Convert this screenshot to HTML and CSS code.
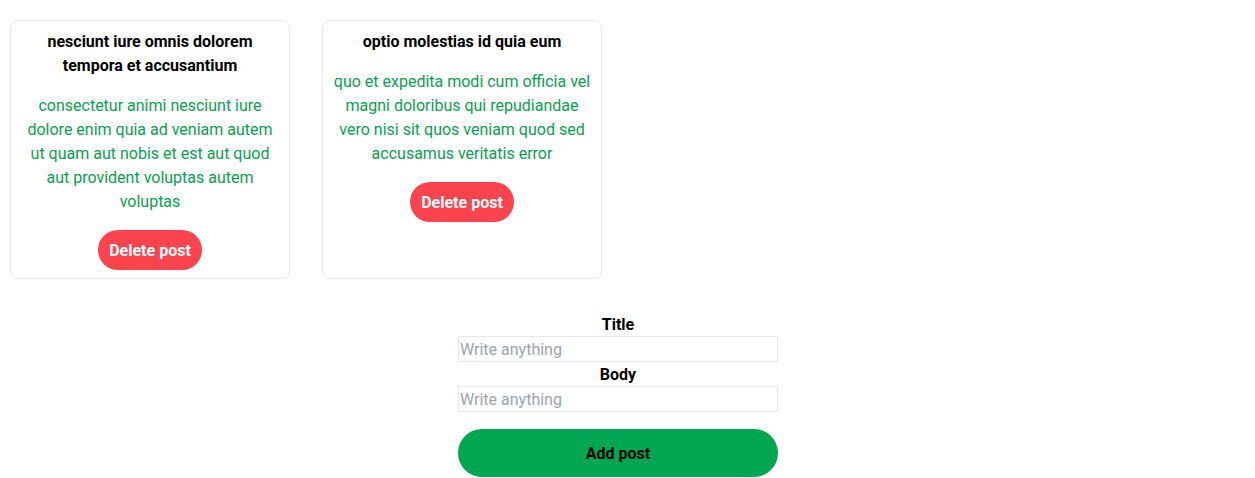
FILE: index.html
```html
<!DOCTYPE html>
<html>
<head>
<meta charset="utf-8">
<link rel="stylesheet" href="styles.css">
</head>
<body>
<div class="page">
  <div class="posts">
    <div class="card">
      <h2 class="card-title">nesciunt iure omnis dolorem tempora et accusantium</h2>
      <p class="card-body">consectetur animi nesciunt iure dolore enim quia ad veniam autem ut quam aut nobis et est aut quod aut provident voluptas autem voluptas</p>
      <button class="btn-delete">Delete post</button>
    </div>
    <div class="card">
      <h2 class="card-title">optio molestias id quia eum</h2>
      <p class="card-body">quo et expedita modi cum officia vel magni doloribus qui repudiandae vero nisi sit quos veniam quod sed accusamus veritatis error</p>
      <button class="btn-delete">Delete post</button>
    </div>
  </div>
  <form class="form">
    <label class="label">Title</label>
    <input class="input" type="text" placeholder="Write anything">
    <label class="label">Body</label>
    <input class="input" type="text" placeholder="Write anything">
    <button type="button" class="btn-add">Add post</button>
  </form>
</div>
</body>
</html>
```
FILE: styles.css
```css
* { box-sizing: border-box; }
body {
  margin: 0;
  font-family: Roboto, "Liberation Sans", sans-serif;
  font-size: 16px;
  line-height: 24px;
  color: #000;
  background: #fff;
}
.page {
  padding: 20px 29px 0 10px;
}
.posts {
  display: flex;
  gap: 32px;
  align-items: stretch;
}
.card {
  width: 280px;
  border: 1px solid #e5e7eb;
  border-radius: 8px;
  padding: 9px 8px 8px;
  display: flex;
  flex-direction: column;
  align-items: center;
  text-align: center;
}
.card-title {
  margin: 0;
  font-size: 16px;
  line-height: 24px;
  font-weight: 700;
}
.card-body {
  margin: 16px 0 0;
  color: #0a9f4f;
}
.btn-delete {
  margin-top: 16px;
  font: inherit;
  font-weight: 700;
  color: #fff;
  background: #fb444e;
  border: none;
  border-radius: 9999px;
  padding: 9px 11px 7px;
  line-height: 24px;
  cursor: pointer;
}
.form {
  width: 320px;
  margin: 33px auto 0;
  display: flex;
  flex-direction: column;
  align-items: stretch;
}
.label {
  text-align: center;
  font-weight: 700;
  padding-top: 1px;
  line-height: 23px;
}
.input {
  font: inherit;
  height: 26px;
  border: 1px solid #e5e7eb;
  padding: 1px 1px 0;
  margin: 0;
  outline: none;
}
.input::placeholder { color: #9ca3af; }
.btn-add {
  margin-top: 17px;
  height: 48px;
  font: inherit;
  font-weight: 700;
  color: #000;
  background: #00a651;
  border: none;
  border-radius: 9999px;
  padding-top: 2px;
  cursor: pointer;
}
```
